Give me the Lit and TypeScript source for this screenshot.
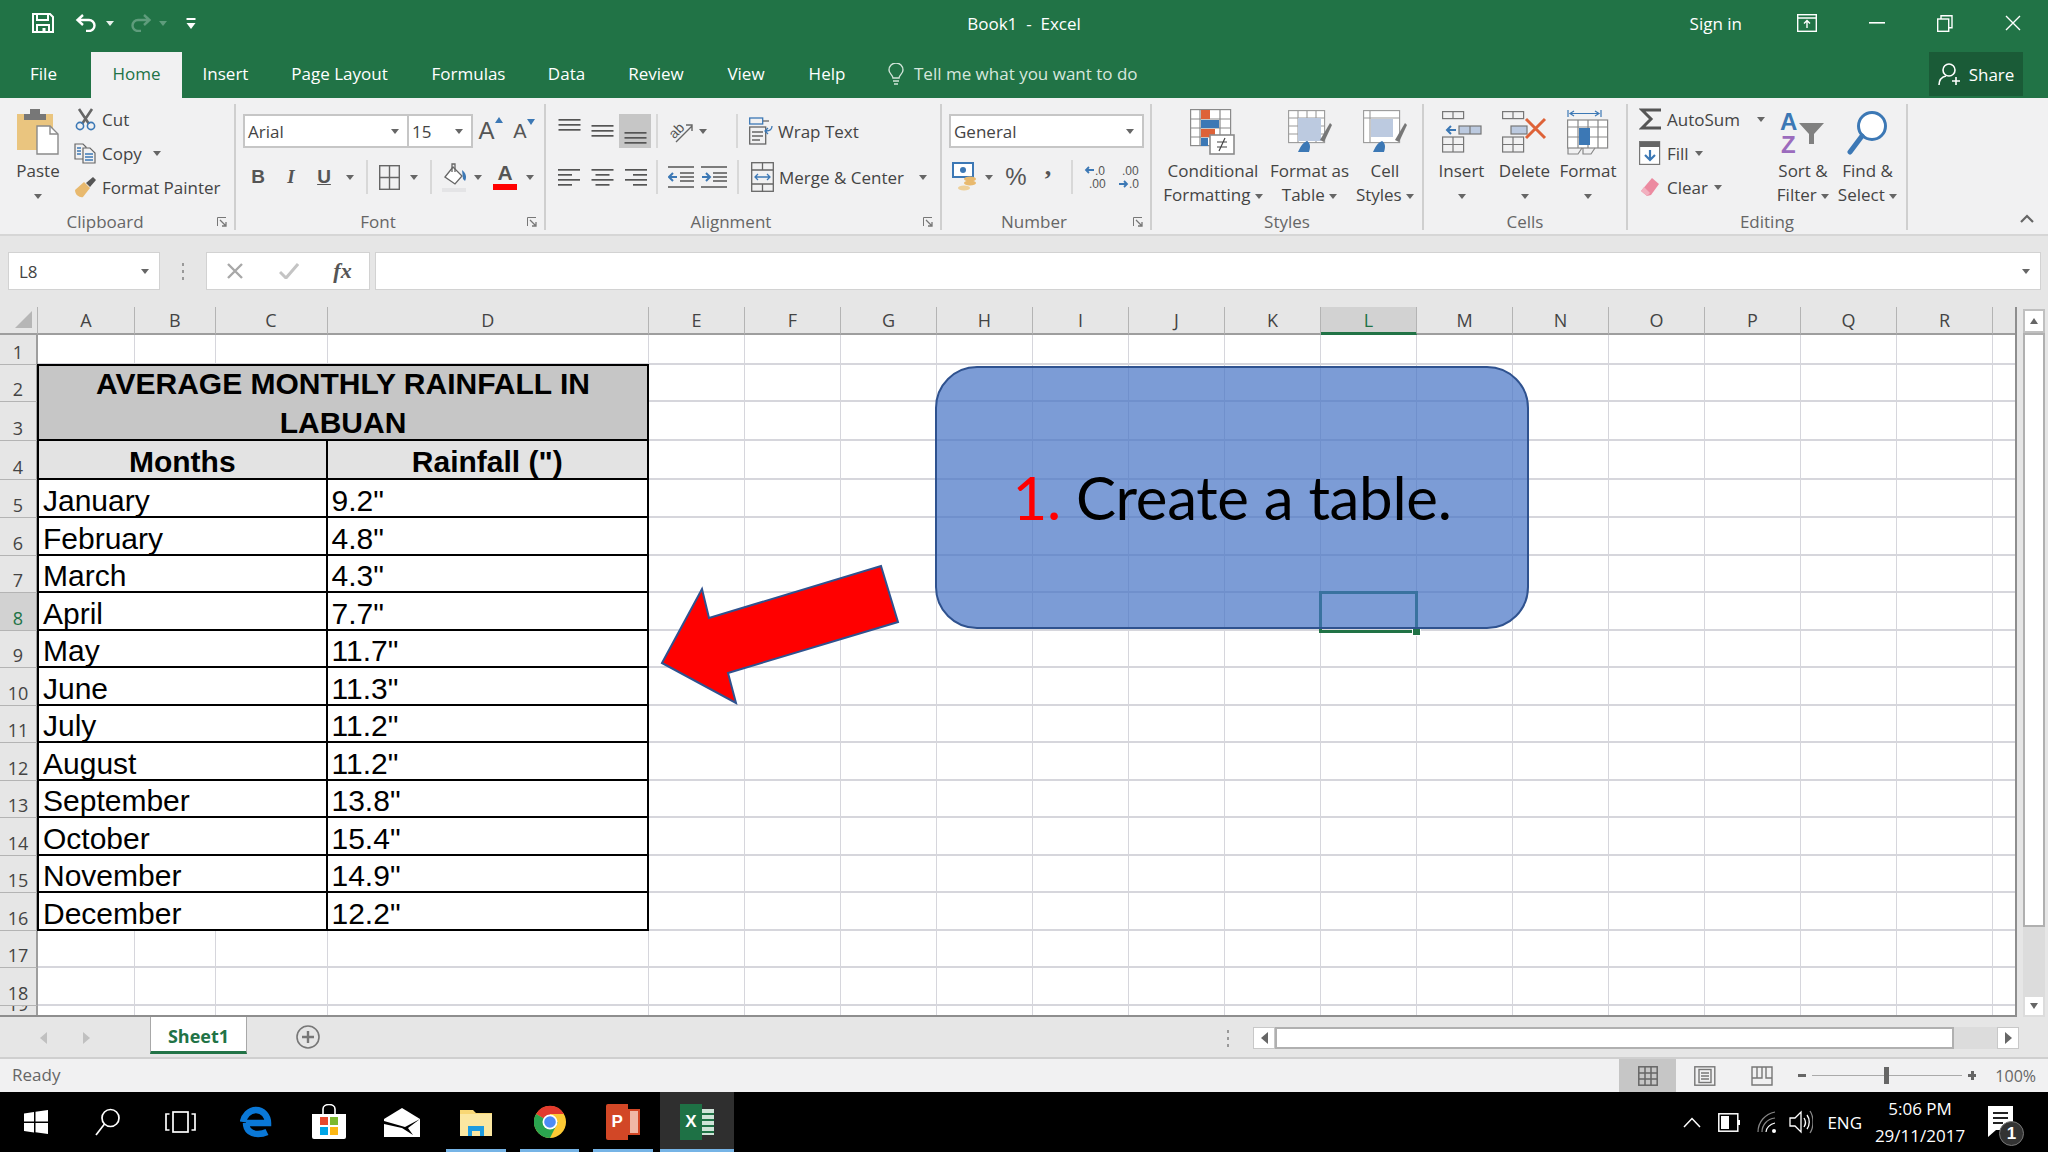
import { LitElement, html, css, TemplateResult } from 'lit';
import { customElement } from 'lit/decorators.js';

const TABS: [string, number][] = [
  ['File', 87], ['Home', 91], ['Insert', 87], ['Page Layout', 141], ['Formulas', 117],
  ['Data', 79], ['Review', 100], ['View', 80], ['Help', 82],
];

// column widths A..R plus the sliver after R
const COLS = [97, 80.5, 112, 321.5, ...Array(14).fill(96), 23];
const LETTERS = 'ABCDEFGHIJKLMNOPQR'.split('').concat('');
const ROWS = [30, 37, 39, 39, 38, ...Array(13).fill(37.5), 11.5];

const MONTHS: [string, string][] = [
  ['January', '9.2"'], ['February', '4.8"'], ['March', '4.3"'], ['April', '7.7"'],
  ['May', '11.7"'], ['June', '11.3"'], ['July', '11.2"'], ['August', '11.2"'],
  ['September', '13.8"'], ['October', '15.4"'], ['November', '14.9"'], ['December', '12.2"'],
];

const caret = (cls = '') => html`<i class="caret ${cls}"></i>`;
const slot = (w: number, c: unknown = '') => html`<span class="slot" style="width:${w}px">${c}</span>`;
const sep = () => html`<span class="vsep"></span>`;

// stack of horizontal rules for the alignment buttons
const rules = (rows: [number, number][], align: 'l' | 'c' | 'r' = 'c', w = 23, h = 26) => html`
  <svg width=${w} height=${h} viewBox="0 0 ${w} ${h}" fill="#555">
    ${rows.map(([y, len]) => {
      const x = align === 'l' ? 0 : align === 'r' ? w - len : (w - len) / 2;
      return html`<svg><rect x=${x} y=${y} width=${len} height="1.7"></rect></svg>`;
    })}
  </svg>`;

const ic = {
  save: html`<svg width="22" height="20" viewBox="0 0 22 20" fill="none" stroke="#fff" stroke-width="2"><path d="M1 1h17l3 3v15H1z"/><path d="M5 1v6h11V1M5 19v-7h12v7"/><path d="M12 15v4" stroke-width="3"/></svg>`,
  undo: html`<svg width="22" height="18" viewBox="0 0 22 18" fill="none" stroke="#fff" stroke-width="2.4"><path d="M8 1 2.5 6 8 11M3 6h11a5 5 0 0 1 0 11h-3"/></svg>`,
  redo: html`<svg width="22" height="18" viewBox="0 0 22 18" fill="none" stroke="#5f9c7c" stroke-width="2.4"><path d="M14 1l5.5 5L14 11M19 6H8a5 5 0 0 0 0 11h3"/></svg>`,
  qat: html`<svg width="10" height="13" viewBox="0 0 10 13" fill="#fff"><rect width="9" height="2" x=".5" y="1"/><path d="M.5 6h9L5 12z"/></svg>`,
  ribbonMode: html`<svg width="20" height="18" viewBox="0 0 20 18" fill="none" stroke="#fff" stroke-width="1.4"><rect x=".7" y=".7" width="18.6" height="16.6"/><path d="M1 4h18M10 14V7M7 9.5 10 6.5l3 3"/></svg>`,
  min: html`<svg width="16" height="2"><rect width="16" height="1.6" fill="#fff"/></svg>`,
  restore: html`<svg width="16" height="17" viewBox="0 0 16 17" fill="none" stroke="#fff" stroke-width="1.4"><rect x=".7" y="4" width="11" height="12.3"/><path d="M4 4V.8h11v12h-3"/></svg>`,
  close: html`<svg width="16" height="16" viewBox="0 0 16 16" stroke="#fff" stroke-width="1.4"><path d="M1 1l14 14M15 1 1 15"/></svg>`,
  bulb: html`<svg width="16" height="22" viewBox="0 0 16 22" fill="none" stroke="#cfe3d8" stroke-width="1.4"><path d="M5 15c0-3-4-4-4-8a7 7 0 0 1 14 0c0 4-4 5-4 8z"/><path d="M5 18h6M6 21h4"/></svg>`,
  person: html`<svg width="24" height="24" viewBox="0 0 24 24" fill="none" stroke="#fff" stroke-width="1.6"><circle cx="11" cy="8" r="6"/><path d="M1 23c0-5 3-8 7-9M14 19h8M18 15v8"/></svg>`,
  paste: html`<svg width="42" height="46" viewBox="0 0 42 46"><rect x="0" y="5" width="36" height="36" fill="#eac57f"/><path d="M7 5h6V0h10v5h6v6H7z" fill="#777"/><path d="M20 17h13l8 8v20H20z" fill="#fff" stroke="#8a8a8a" stroke-width="1.4"/><path d="M33 17v8h8" fill="none" stroke="#8a8a8a" stroke-width="1.4"/></svg>`,
  cut: html`<svg width="21" height="23" viewBox="0 0 21 23" fill="none"><path d="M4 1l10 15M17 1 7 16" stroke="#666" stroke-width="2.6"/><circle cx="5" cy="18" r="3.6" stroke="#3c78b5" stroke-width="1.6"/><circle cx="16" cy="18" r="3.6" stroke="#3c78b5" stroke-width="1.6"/></svg>`,
  copy: html`<svg width="22" height="21" viewBox="0 0 22 21" fill="none" stroke="#666" stroke-width="1.2"><path d="M1 1h8l3 3v12H1z"/><path d="M9 5h7l5 5v10H9z" fill="#f1f1f2"/><path d="M3 5h4M3 8h4M3 11h4" stroke="#3c78b5" stroke-width="1.4"/><path d="M11 11h8M11 14h8M11 17h8" stroke="#3c78b5" stroke-width="1.4"/></svg>`,
  painter: html`<svg width="24" height="22" viewBox="0 0 24 22"><path d="M2 14 11 6l6 6-7 9c-3 1-8-2-8-7z" fill="#e8b96e"/><path d="M13 7l7-6 3 3-6 7z" fill="#555"/></svg>`,
  tri: (c: string, down = false) => html`<svg width="8" height="6" viewBox="0 0 8 6" fill=${c} class="tri"><path d=${down ? 'M0 0h8L4 6z' : 'M0 6h8L4 0z'}/></svg>`,
  borders: html`<svg width="21" height="25" viewBox="0 0 21 25" fill="none" stroke="#666" stroke-width="1.4"><rect x=".7" y=".7" width="19.6" height="23.6"/><path d="M10.5 1v23M1 12.5h19"/></svg>`,
  fill: html`<svg width="26" height="30" viewBox="0 0 26 30"><path d="M3 15 11 5l9 9-7 8z" fill="#fff" stroke="#666" stroke-width="1.3"/><path d="M10 10V2h3v8" fill="none" stroke="#666" stroke-width="1.3"/><path d="M20 8c4 3 5 7 3 11l-2-2z" fill="#3c78b5"/><rect x="0" y="26" width="24" height="4" fill="#e4e4e6"/></svg>`,
  orient: html`<svg width="26" height="26" viewBox="0 0 26 26" fill="none" stroke="#666" stroke-width="1.4"><text x="1" y="17" font-family="Liberation Sans" font-size="14" fill="#555" stroke="none" transform="rotate(-45 9 13)">ab</text><path d="M8 24 24 8M18 7h6v6"/></svg>`,
  wrap: html`<svg width="24" height="28" viewBox="0 0 24 28" fill="none" stroke="#666" stroke-width="1.3"><rect x=".7" y="1" width="13" height="6" stroke="#3c78b5"/><path d="M14 4h6"/><rect x=".7" y="10" width="16" height="17"/><path d="M3 15h11M3 19h11M3 23h8"/><path d="M23 9c0 4-2 5-6 5M19 11l-3 3 3 3" stroke="#3c78b5"/></svg>`,
  merge: html`<svg width="23" height="30" viewBox="0 0 23 30" fill="none" stroke="#666" stroke-width="1.3"><rect x=".7" y=".7" width="21.6" height="28.6"/><path d="M1 8h21M1 22h21M11.5 1v7M11.5 22v8"/><path d="M4 15h15M7 12l-3 3 3 3M16 12l3 3-3 3" stroke="#3c78b5"/></svg>`,
  outdent: html`<svg width="26" height="22" viewBox="0 0 26 22" fill="none" stroke="#555" stroke-width="1.6"><path d="M0 1h26M12 7h14M12 11h14M12 15h14M0 21h26"/><path d="M9 11H1M5 7l-4 4 4 4" stroke="#3c78b5" stroke-width="2"/></svg>`,
  indent: html`<svg width="26" height="22" viewBox="0 0 26 22" fill="none" stroke="#555" stroke-width="1.6"><path d="M0 1h26M12 7h14M12 11h14M12 15h14M0 21h26"/><path d="M1 11h8M5 7l4 4-4 4" stroke="#3c78b5" stroke-width="2"/></svg>`,
  currency: html`<svg width="26" height="32" viewBox="0 0 26 32"><rect x="1" y="2" width="20" height="14" fill="#fff" stroke="#3c78b5" stroke-width="2"/><circle cx="11" cy="9" r="3" fill="#3c78b5"/><ellipse cx="18" cy="18" rx="6" ry="2.6" fill="#e8b96e"/><ellipse cx="18" cy="22" rx="6" ry="2.6" fill="#e8b96e"/><ellipse cx="12" cy="27" rx="6" ry="2.6" fill="#eed09a"/></svg>`,
  incDec: html`<svg width="24" height="26" viewBox="0 0 24 26"><path d="M10 6H2M5 3 2 6l3 3" fill="none" stroke="#3c78b5" stroke-width="1.8"/><text x="11" y="11" font-family="Liberation Sans" font-size="12" fill="#555">.0</text><text x="5" y="24" font-family="Liberation Sans" font-size="12" fill="#555">.00</text></svg>`,
  decDec: html`<svg width="24" height="26" viewBox="0 0 24 26"><text x="5" y="11" font-family="Liberation Sans" font-size="12" fill="#555">.00</text><path d="M2 20h8M7 17l3 3-3 3" fill="none" stroke="#3c78b5" stroke-width="1.8"/><text x="12" y="24" font-family="Liberation Sans" font-size="12" fill="#555">.0</text></svg>`,
  cond: html`<svg width="46" height="46" viewBox="0 0 46 46" fill="#fff" stroke="#8b8b8b" stroke-width="1.2"><rect x=".6" y=".6" width="40" height="36"/><path d="M10 1v36M30 1v36M1 10h40M1 19h40M1 28h40" fill="none"/><rect x="11" y="1" width="9" height="9" fill="#de6238" stroke="none"/><rect x="11" y="11" width="18" height="8" fill="#3c78b5" stroke="none"/><rect x="11" y="20" width="14" height="8" fill="#de6238" stroke="none"/><rect x="11" y="29" width="7" height="8" fill="#3c78b5" stroke="none"/><rect x="20" y="26" width="24" height="19" stroke-width="1.6"/><path d="M27 33h10M27 38h10M35 29l-6 13" fill="none" stroke="#444"/></svg>`,
  tableFmt: html`<svg width="44" height="44" viewBox="0 0 44 44" fill="#fff" stroke="#9a9a9a" stroke-width="1.1"><rect x=".6" y=".6" width="36" height="32"/><path d="M1 8h36M1 16h36M1 24h36M10 1v32M19 1v32M28 1v32" fill="none"/><rect x="10" y="8" width="23" height="23" fill="#bccae0" stroke="none"/><path d="M32 30l10-17 2 2-8 17z" fill="#777" stroke="none"/><path d="M10 42c2-4 4-9 9-11 3 2 4 5 2 11z" fill="#3c78b5" stroke="none"/></svg>`,
  cellStyles: html`<svg width="44" height="44" viewBox="0 0 44 44" fill="#fff" stroke="#9a9a9a" stroke-width="1.1"><rect x=".6" y=".6" width="36" height="32"/><path d="M1 8h36M7 1v32" fill="none"/><rect x="8" y="9" width="22" height="18" fill="#bccae0" stroke="none"/><path d="M32 30l10-17 2 2-8 17z" fill="#777" stroke="none"/><path d="M10 42c2-4 4-9 9-11 3 2 4 5 2 11z" fill="#3c78b5" stroke="none"/></svg>`,
  cellInsert: html`<svg width="40" height="42" viewBox="0 0 40 42" fill="none" stroke="#777" stroke-width="1.2"><rect x=".6" y=".6" width="21" height="7"/><path d="M11 1v7"/><rect x="17" y="15" width="22" height="8" fill="#bccae0"/><path d="M28 15v8"/><rect x=".6" y="26" width="21" height="15"/><path d="M11 26v15M1 33.500h21"/><path d="M14 19H5M9 15l-4 4 4 4" stroke="#3c78b5" stroke-width="2"/></svg>`,
  cellDelete: html`<svg width="46" height="42" viewBox="0 0 46 42" fill="none" stroke="#777" stroke-width="1.2"><rect x=".6" y=".6" width="21" height="7"/><path d="M11 1v7"/><rect x="9" y="15" width="16" height="8" fill="#bccae0"/><rect x=".6" y="26" width="21" height="15"/><path d="M11 26v15M1 33.500h21"/><path d="M24 8l19 19M43 8 24 27" stroke="#de6238" stroke-width="3"/></svg>`,
  cellFormat: html`<svg width="42" height="46" viewBox="0 0 42 46" fill="none" stroke="#888" stroke-width="1.2"><path d="M1 1v7M34 1v7M3 4.500h29M7 2 3 4.500 7 7M28 2l4 2.500-4 2.500" stroke="#3c78b5"/><rect x=".6" y="11" width="40" height="28" fill="#fff"/><path d="M1 18h40M1 28h40M11 11v28M21 11v28M31 11v28"/><rect x="12" y="19" width="11" height="17" fill="#3c78b5" stroke="none"/><path d="M1 39v6h10l4-6M16 39v6h8l4-6"/></svg>`,
  sum: html`<svg width="23" height="24" viewBox="0 0 23 24" fill="none" stroke="#555" stroke-width="3"><path d="M22 3H3l9 9-9 9h19"/></svg>`,
  fillDown: html`<svg width="22" height="24" viewBox="0 0 22 24" fill="none" stroke="#777" stroke-width="1.2"><rect x=".6" y=".6" width="20" height="22.800" fill="#fff"/><rect x="1" y="1" width="20" height="5" fill="#666" stroke="none"/><path d="M11 9v10M6 14l5 5 5-5" stroke="#3c78b5" stroke-width="2.2"/></svg>`,
  eraser: html`<svg width="20" height="20" viewBox="0 0 20 20"><path d="M12 1l7 6-8 11-4 1-6-5z" fill="#ec8aa0"/><path d="M7 19l-6-5 3-4 6 6z" fill="#f2b1c0"/></svg>`,
  sort: html`<svg width="46" height="46" viewBox="0 0 46 46"><text x="0" y="21" font-family="Liberation Sans" font-size="24" font-weight="700" fill="#3c78b5">A</text><text x="1" y="44" font-family="Liberation Sans" font-size="24" font-weight="700" fill="#9b6bbd">Z</text><path d="M19 14h25l-10 11v10h-5V25z" fill="#808080"/></svg>`,
  find: html`<svg width="42" height="46" viewBox="0 0 42 46" fill="none"><circle cx="25" cy="17" r="13.500" stroke="#3c78b5" stroke-width="3" fill="#fff"/><path d="M15 27 3 43" stroke="#3c78b5" stroke-width="5" stroke-linecap="round"/></svg>`,
  launcher: html`<svg width="10" height="10" viewBox="0 0 10 10" fill="none" stroke="#777" stroke-width="1"><path d="M.5 9V.5H9"/><path d="M3 3l6 6M9 5v4H5" stroke-width="1.3"/></svg>`,
  up: html`<svg width="14" height="9" viewBox="0 0 14 9" fill="none" stroke="#666" stroke-width="2.2"><path d="M1 8l6-6 6 6"/></svg>`,
  x: html`<svg width="16" height="16" viewBox="0 0 16 16" stroke="#a8a8a8" stroke-width="2.400"><path d="M1 1l14 14M15 1 1 15"/></svg>`,
  check: html`<svg width="20" height="16" viewBox="0 0 20 16" fill="none" stroke="#c4c4c4" stroke-width="3"><path d="M1 9l6 6L19 1"/></svg>`,
  plusCircle: html`<svg width="24" height="24" viewBox="0 0 24 24" fill="none" stroke="#777" stroke-width="1.6"><circle cx="12" cy="12" r="11"/><path d="M12 6v12M6 12h12" stroke-width="2.400"/></svg>`,
  normal: html`<svg width="20" height="20" viewBox="0 0 20 20" fill="none" stroke="#666" stroke-width="1.5"><rect x=".8" y=".8" width="18.400" height="18.400"/><path d="M7 1v18M13 1v18M1 7h18M1 13h18"/></svg>`,
  layout: html`<svg width="22" height="20" viewBox="0 0 22 20" fill="none" stroke="#777" stroke-width="1.4"><rect x=".8" y=".8" width="20" height="18.400"/><rect x="5" y="3.500" width="12" height="13"/><path d="M7 7h8M7 10h8M7 13h8"/></svg>`,
  pageBreak: html`<svg width="22" height="20" viewBox="0 0 22 20" fill="none" stroke="#777" stroke-width="1.4"><path d="M1 1h20v18H1zM1 12h10V1M6 1v11M21 12h-6V1"/></svg>`,
  win: html`<svg width="24" height="24" viewBox="0 0 24 24" fill="#fff"><path d="M0 3.500 10 2v9.500H0zM11.500 1.800 24 0v11.500H11.500zM0 13h10v9.500L0 21zM11.500 13H24v11l-12.500-1.800z"/></svg>`,
  search: html`<svg width="26" height="28" viewBox="0 0 26 28" fill="none" stroke="#fff" stroke-width="1.7"><circle cx="15.500" cy="10" r="8.500"/><path d="M9.500 16 1 27"/></svg>`,
  taskview: html`<svg width="31" height="22" viewBox="0 0 31 22" fill="none" stroke="#fff" stroke-width="1.7"><rect x="8" y="1" width="15" height="20"/><path d="M4.500 3H1v16h3.500M26.500 3H30v16h-3.500"/></svg>`,
  edge: html`<svg width="32" height="34" viewBox="0 0 32 32" fill="none" stroke="#0a78d7" stroke-width="6.500"><path d="M6 17h22c0-7-5-13-12-13C9 4 4 10 3 16M6 17c0 8 6 11 12 11 4 0 7-1 9-2"/></svg>`,
  store: html`<svg width="36" height="36" viewBox="0 0 36 36"><path d="M1 10h34v23a2 2 0 0 1-2 2H3a2 2 0 0 1-2-2z" fill="#fff"/><path d="M12 10V5c0-6 12-6 12 0v5" fill="none" stroke="#fff" stroke-width="1.600"/><rect x="9" y="13" width="8" height="8" fill="#e7492e"/><rect x="19" y="13" width="8" height="8" fill="#7cb82f"/><rect x="9" y="23" width="8" height="8" fill="#00a6e8"/><rect x="19" y="23" width="8" height="8" fill="#fcb714"/></svg>`,
  mail: html`<svg width="36" height="29" viewBox="0 0 36 29"><path d="M0 11 18 0l18 11v18H0z" fill="#fff"/><path d="M0 13l21 6 15-8-12 9 5 7-11-7-18-4z" fill="#000"/></svg>`,
  folder: html`<svg width="32" height="28" viewBox="0 0 32 28"><path d="M0 2h13l3 3h16v23H0z" fill="#f8d775"/><path d="M0 6h32v22H0z" fill="#fbe7a1"/><path d="M8 18h16v10h-4v-5h-8v5H8z" fill="#1e9be0"/></svg>`,
  chrome: html`<svg width="32" height="34" viewBox="0 0 32 32"><circle cx="16" cy="16" r="16" fill="#fcc934"/><path d="M16 16 2.100 8A16 16 0 0 1 30 8H16z" fill="#e33b2e"/><path d="M16 16 2.100 8A16 16 0 0 0 16 32l8-16z" fill="#2aa44f"/><circle cx="16" cy="16" r="7.500" fill="#fff"/><circle cx="16" cy="16" r="5.800" fill="#4d8bf5"/></svg>`,
  chevron: html`<svg width="18" height="11" viewBox="0 0 18 11" fill="none" stroke="#fff" stroke-width="1.500"><path d="M1 10l8-8.500L17 10"/></svg>`,
  battery: html`<svg width="22" height="19" viewBox="0 0 22 19"><rect x=".8" y=".8" width="19" height="17.400" fill="none" stroke="#fff" stroke-width="1.500"/><rect x="3" y="3" width="8" height="13" fill="#fff"/><rect x="20" y="7" width="2" height="5" fill="#fff"/></svg>`,
  wifi: html`<svg width="20" height="22" viewBox="0 0 20 22" fill="none" stroke="#bbb" stroke-width="1.200"><path d="M1 21C1 11 8 3 18 1M5 21c0-7 5-13 13-14" stroke="#888"/><path d="M9 21c0-4 4-8 9-9" stroke="#fff"/><circle cx="17" cy="20" r="2" fill="#fff" stroke="none"/></svg>`,
  volume: html`<svg width="24" height="26" viewBox="0 0 24 26" fill="none" stroke="#fff" stroke-width="1.300"><path d="M1 9h5l6-6v20l-6-6H1z"/><path d="M15 9c2 3 2 6 0 9M18 6c3 4 3 10 0 14" /><path d="M21 2c4 6 4 16 0 22" stroke="#888"/></svg>`,
  notify: html`<svg width="26" height="32" viewBox="0 0 26 32"><path d="M0 0h25v24H8l-8 7z" fill="#fff"/><path d="M5 7h15M5 12h15M5 17h10" stroke="#222" stroke-width="1.800"/></svg>`,
};

@customElement('app-root')
export class AppRoot extends LitElement {
  static styles = css`
    :host {
      display: flex;
      flex-direction: column;
      width: 2048px;
      height: 1152px;
      overflow: hidden;
      background: #e6e6e6;
      font-family: 'Open Sans', 'Noto Sans', sans-serif;
      font-size: 17px;
      color: #444;
    }
    svg { display: block; flex: none; }
    svg.tri { display: inline-block; }

    .caret {
      display: inline-block;
      width: 0;
      height: 0;
      border-left: 4.5px solid transparent;
      border-right: 4.5px solid transparent;
      border-top: 5px solid #666;
      vertical-align: middle;
    }
    .caret.light { border-top-color: #e8f1ec; }
    .caret.dim { border-top-color: #5f9c7c; }
    .slot {
      display: inline-flex;
      align-items: center;
      justify-content: center;
      flex: none;
      height: 100%;
    }

    /* title bar */
    .green { background: #217346; color: #fff; }
    .titlebar {
      display: grid;
      grid-template-columns: 1fr auto 1fr;
      align-items: center;
      height: 52px;
      padding-bottom: 6px;
      box-sizing: border-box;
    }
    .qat { display: flex; align-items: center; height: 100%; padding-left: 32px; }
    .doc-title { font-size: 17px; white-space: pre; }
    .win-ctl { display: flex; align-items: center; justify-content: flex-end; height: 100%; }
    .signin { margin-right: 29px; }

    .tabrow { display: flex; align-items: flex-end; height: 46px; }
    .tab {
      display: flex;
      align-items: center;
      justify-content: center;
      height: 46px;
      flex: none;
      padding-bottom: 3px;
      box-sizing: border-box;
    }
    .tab:first-child { margin-right: 4px; }
    .tab.active { background: #f1f1f2; color: #217346; }
    .tellme { display: flex; align-items: center; gap: 10px; height: 46px; padding-bottom: 3px; box-sizing: border-box; margin-left: 20px; color: #d6e7dd; }
    .share {
      display: flex;
      align-items: center;
      justify-content: center;
      gap: 7px;
      width: 94px;
      height: 44px;
      margin: 0 25px 2px auto;
      background: #1a5b37;
    }

    /* ribbon */
    .ribbon {
      display: flex;
      height: 138px;
      padding-top: 6px;
      box-sizing: border-box;
      background: #f1f1f2;
      border-bottom: 2px solid #d6d6d6;
    }
    .group {
      display: flex;
      flex-direction: column;
      flex: none;
      height: 126px;
      box-sizing: border-box;
      border-right: 2px solid #cfcfcf;
    }
    .body { display: flex; height: 110px; }
    .label-row { display: flex; align-items: center; height: 16px; line-height: 18px; padding-top: 5px; color: #666; }
    .label-row span { flex: 1; text-align: center; }
    .launcher { flex: none; width: 24px; display: flex; justify-content: center; }
    .clipboard { width: 236px; }
    .font { width: 310px; }
    .alignment { width: 396px; }
    .number { width: 210px; }
    .styles { width: 272px; }
    .cells { width: 204px; }
    .editing { width: 280px; }
    .collapse { flex: 1; display: flex; align-items: flex-end; justify-content: flex-end; padding: 0 14px 7px 0; height: 126px; box-sizing: border-box; }

    .large {
      display: flex;
      flex-direction: column;
      align-items: center;
      flex: none;
      line-height: 24px;
      white-space: nowrap;
    }
    .large .icon { display: flex; align-items: center; justify-content: center; height: 55px; }
    .small-rows { display: flex; flex-direction: column; margin-top: -2px; }
    .small { display: flex; align-items: center; height: 34px; white-space: nowrap; }
    .small .glyph { display: flex; justify-content: center; width: 28px; margin-right: 3px; flex: none; }
    .small .caret { margin-left: 6px; }
    .clipboard .body { padding-left: 8px; gap: 3px; }
    .styles .body { padding-left: 11px; }
    .cells .body { padding-left: 6px; }
    .editing .body { padding-left: 8px; }
    .editing .small-rows { width: 135px; }

    .two-rows { display: flex; flex-direction: column; gap: 12px; padding: 10px 0 0 7px; }
    .row { display: flex; align-items: center; height: 34px; white-space: nowrap; }
    .field {
      display: flex;
      align-items: center;
      justify-content: space-between;
      box-sizing: border-box;
      height: 34px;
      padding: 0 8px 0 3px;
      background: #fff;
      border: 2px solid #c6c6c6;
      color: #444;
    }
    .fontname { width: 166px; }
    .fontsize { width: 64px; border-left: none; }
    .fmt { width: 195px; }
    .vsep { display: block; width: 2px; height: 34px; background: #d8d8d8; flex: none; }
    .selected { background: #c6c6c6; }
    .grow { font-size: 24px; line-height: 1.2; color: #555; display: inline-flex; align-items: flex-start; font-family: 'Liberation Sans', sans-serif; }
    .grow.sm { font-size: 20px; }
    .fmt-b { font: 700 19px 'Liberation Sans', sans-serif; color: #555; }
    .fmt-i { font: italic 700 19px 'Liberation Serif', serif; color: #555; }
    .fmt-u { font: 700 19px 'Liberation Sans', sans-serif; color: #555; text-decoration: underline; }
    .colorA { display: flex; flex-direction: column; align-items: center; font: 700 21px/18px 'Liberation Sans', sans-serif; color: #555; }
    .colorA i { display: block; width: 24px; height: 6px; background: #f00; margin-top: 2px; }
    .pct { font: 24px 'Liberation Sans', sans-serif; color: #555; }
    .comma { font: 700 26px/1 'Liberation Serif', serif; color: #555; padding-bottom: 20px; }
    .wide-text { margin-left: 6px; }

    /* formula bar */
    .fxbar {
      display: flex;
      align-items: center;
      height: 71px;
      box-sizing: border-box;
      padding: 16px 7px 17px 8px;
      background: #e6e6e6;
    }
    .box { display: flex; align-items: center; height: 38px; background: #fff; border: 1px solid #d2d2d2; box-sizing: border-box; flex: none; }
    .namebox { width: 152px; justify-content: space-between; padding: 0 10px; }
    .grip { width: 46px; display: flex; flex-direction: column; align-items: center; gap: 4px; flex: none; }
    .grip i { display: block; width: 2px; height: 3px; background: #999; }
    .fxbtns { width: 164px; }
    .fx { font: italic 700 22px 'Liberation Serif', serif; color: #555; }
    .fxinput { flex: 1; margin-left: 5px; justify-content: flex-end; padding-right: 10px; }

    /* sheet */
    .sheet-wrap { display: flex; height: 710px; background: #e6e6e6; flex: none; }
    .sheet {
      position: relative;
      display: grid;
      width: 2017px;
      height: 710px;
      overflow: hidden;
      background: #fff;
      border-right: 2px solid #8e8e8e;
      border-bottom: 2px solid #8e8e8e;
      box-sizing: border-box;
    }
    .hd {
      display: flex;
      align-items: center;
      justify-content: center;
      overflow: hidden;
      background: #e6e6e6;
      color: #444;
      box-sizing: border-box;
      font-size: 18px;
    }
    .hd.col { border-right: 1px solid #b4b4b4; border-bottom: 2px solid #9e9e9e; }
    .hd.rowh { border-right: 2px solid #9e9e9e; border-bottom: 1px solid #b4b4b4; align-items: flex-end; line-height: 24px; }
    .hd.on { background: #d2d2d2; color: #217346; }
    .hd.col.on { border-bottom: 3px solid #217346; }
    .corner { display: flex; align-items: flex-end; justify-content: flex-end; padding: 0 5px 5px 0; background: #e6e6e6; border-bottom: 2px solid #9e9e9e; border-right: 1px solid #b4b4b4; box-sizing: border-box; }
    .corner i { display: block; border-left: 17px solid transparent; border-bottom: 17px solid #b6b6b6; }
    .c { border-right: 1px solid #d6d6dc; border-bottom: 2px solid #d6d6dc; box-sizing: border-box; }
    .t {
      display: flex;
      align-items: flex-end;
      box-sizing: border-box;
      overflow: hidden;
      font: 30px/31px 'Liberation Sans', sans-serif;
      color: #000;
      border-right: 2px solid #000;
      border-bottom: 2px solid #000;
      padding-left: 4px;
      white-space: nowrap;
    }
    .t.first { border-left: 2px solid #000; margin-left: -1px; }
    .t.title {
      justify-content: center;
      align-items: center;
      text-align: center;
      white-space: normal;
      background: #c6c6c6;
      font-weight: 700;
      line-height: 39px;
      border-top: 2px solid #000;
      padding: 1px 40px 0;
      margin-top: -1px;
    }
    .t.head { justify-content: center; background: #e3e3e3; font-weight: 700; padding-left: 0; line-height: 33px; }
    .sel {
      position: relative;
      margin: -2px -1px -2px -2px;
      border: 3px solid #217346;
    }
    .sel i { position: absolute; right: -6px; bottom: -6px; width: 7px; height: 7px; background: #217346; border: 1px solid #fff; }
    .note {
      position: absolute;
      left: 935px;
      top: 59px;
      width: 594px;
      height: 263px;
      box-sizing: border-box;
      display: flex;
      align-items: center;
      justify-content: center;
      padding-bottom: 2px;
      border: 2px solid #2f528f;
      border-radius: 42px;
      background: rgba(68, 114, 196, 0.7);
      color: #000;
      font: 60px 'Lato', sans-serif;
      letter-spacing: -0.3px;
      white-space: pre;
    }
    .note b { font-weight: 400; color: #f00; }
    .arrow { position: absolute; left: 0; top: 0; }

    .vscroll { flex: 1; display: flex; flex-direction: column; align-items: center; padding: 2px 0 0 2px; box-sizing: border-box; height: 710px; }
    .vbtn { display: flex; align-items: center; justify-content: center; width: 22px; height: 24px; background: #fff; border: 2px solid #c0c0c0; box-sizing: border-box; flex: none; }
    .vbtn.down { height: 22px; border-color: #dcdcdc; }
    .vtrack { flex: 1; width: 22px; background: #dcdcdc; }
    .vthumb { height: 594px; background: #fff; border: 2px solid #b0b0b0; box-sizing: border-box; }

    /* sheet tabs */
    .sheetbar {
      display: flex;
      height: 42px;
      flex: none;
      background: #e6e6e6;
      box-sizing: border-box;
      border-bottom: 2px solid #cfcfcf;
    }
    .nav { display: flex; align-items: center; width: 150px; padding-left: 40px; gap: 36px; padding-top: 2px; box-sizing: border-box; }
    .nav i { display: block; border-top: 6px solid transparent; border-bottom: 6px solid transparent; }
    .nav i.l { border-right: 7px solid #c0c0c0; }
    .nav i.r { border-left: 7px solid #c0c0c0; }
    .sheettab {
      display: flex;
      align-items: center;
      justify-content: center;
      width: 97px;
      height: 37px;
      padding-top: 3px;
      background: #fff;
      color: #217346;
      font-size: 18px;
      font-weight: 700;
      border-bottom: 3px solid #217346;
      box-sizing: border-box;
      border-left: 1px solid #a8a8a8;
      border-right: 1px solid #a8a8a8;
      flex: none;
    }
    .addsheet { display: flex; align-items: center; margin-left: 49px; height: 40px; }
    .hscroll { display: flex; align-items: center; margin-left: auto; height: 42px; padding-right: 29px; }
    .dots { display: flex; flex-direction: column; gap: 4px; margin-right: 24px; }
    .dots i { display: block; width: 2px; height: 3px; background: #999; }
    .hbtn { display: flex; align-items: center; justify-content: center; width: 22px; height: 22px; background: #fff; border: 1px solid #c8c8c8; box-sizing: border-box; }
    .hthumb { width: 679px; height: 22px; background: #fff; border: 2px solid #b0b0b0; box-sizing: border-box; }
    .htrack { width: 43px; height: 22px; background: #dcdcdc; }

    /* status */
    .status {
      display: flex;
      align-items: center;
      height: 33px;
      flex: none;
      padding-left: 12px;
      padding-bottom: 2px;
      box-sizing: border-box;
      background: #f1f1f2;
      color: #666;
    }
    .views { display: flex; align-items: center; height: 33px; margin: 0 0 -2px auto; }
    .viewbtn { display: flex; align-items: center; justify-content: center; width: 57px; height: 33px; flex: none; }
    .slider { display: flex; align-items: center; margin-left: 8px; }
    .slider .pm { width: 8px; height: 3px; background: #666; position: relative; }
    .slider .pm.plus::after { content: ''; position: absolute; left: 2.500px; top: -3px; width: 3px; height: 9px; background: #666; }
    .slider .track { position: relative; width: 150px; height: 1px; margin: 0 6px; background: #aaa; }
    .slider .track i { position: absolute; left: 72px; top: -8px; width: 5px; height: 17px; background: #666; }
    .zoom { width: 52px; text-align: right; padding-right: 12px; color: #666; font-size: 16px; flex: none; margin-left: 8px; }

    /* taskbar */
    .taskbar { display: flex; align-items: center; height: 60px; flex: 1; background: #000; color: #fff; }
    .task {
      position: relative;
      display: flex;
      align-items: center;
      justify-content: center;
      width: 73.700px;
      height: 60px;
      flex: none;
    }
    .task.narrow { width: 72px; }
    .task.edge { margin-left: 2px; padding-left: 3px; box-sizing: border-box; }
    .task.run::after { content: ''; position: absolute; left: 7px; right: 7px; bottom: 0; height: 3px; background: #76b4e6; }
    .task.focus { background: #2f2f2f; }
    .task.focus::after { left: 0; right: 0; }
    .ppt { display: flex; align-items: center; width: 34px; height: 36px; }
    .ppt b { display: flex; align-items: center; justify-content: center; width: 22px; height: 36px; background: #d24726; font: 700 17px 'Liberation Sans', sans-serif; border-radius: 2px 0 0 2px; }
    .ppt i { display: block; width: 12px; height: 26px; background: #f0b8a6; border: 2px solid #d24726; box-sizing: border-box; }
    .xl { display: flex; align-items: center; width: 34px; height: 36px; }
    .xl b { display: flex; align-items: center; justify-content: center; width: 22px; height: 36px; background: #1e7145; font: 700 17px 'Liberation Sans', sans-serif; }
    .xl i { display: block; width: 12px; height: 26px; background: repeating-linear-gradient(#cfe3d8 0 4px, #1e7145 4px 6px); }
    .tray { display: flex; align-items: center; margin-left: auto; height: 60px; padding-right: 34px; color: #fff; }
    .clock { display: flex; flex-direction: column; align-items: center; line-height: 27px; width: 100px; margin-left: 8px; font-size: 17px; }
    .note-ic { position: relative; margin-left: 18px; }
    .note-ic b {
      position: absolute; right: -10px; bottom: -8px; width: 25px; height: 25px; border-radius: 50%;
      display: flex; align-items: center; justify-content: center;
      background: #333; font: 700 17px 'Liberation Sans', sans-serif; color: #fff; border: 1px solid #777; box-sizing: border-box;
    }
  `;

  private large(icon: TemplateResult, text: unknown[], width: number) {
    return html`<div class="large" style="width:${width}px"><div class="icon">${icon}</div>${text.map((t) => html`<div>${t}</div>`)}</div>`;
  }

  private group(cls: string, label: string, launcher: boolean, body: TemplateResult) {
    return html`<section class="group ${cls}">
      <div class="body">${body}</div>
      <div class="label-row"><span>${label}</span>${launcher ? html`<div class="launcher">${ic.launcher}</div>` : ''}</div>
    </section>`;
  }

  private renderRibbon() {
    const stripes: [number, number][] = [[3, 22], [8, 14], [13, 22], [18, 14]];
    return html`<div class="ribbon">
      ${this.group('clipboard', 'Clipboard', true, html`
        ${this.large(ic.paste, ['Paste', caret()], 60)}
        <div class="small-rows">
          <div class="small"><span class="glyph">${ic.cut}</span>Cut</div>
          <div class="small"><span class="glyph">${ic.copy}</span>Copy ${slot(24, caret())}</div>
          <div class="small"><span class="glyph">${ic.painter}</span>Format Painter</div>
        </div>`)}
      ${this.group('font', 'Font', true, html`
        <div class="two-rows">
          <div class="row">
            <div class="field fontname">Arial ${caret()}</div>
            <div class="field fontsize">15 ${caret()}</div>
            ${slot(35, html`<span class="grow">A${ic.tri('#3c78b5')}</span>`)}
            ${slot(32, html`<span class="grow sm">A${ic.tri('#3c78b5', true)}</span>`)}
          </div>
          <div class="row">
            ${slot(30, html`<span class="fmt-b">B</span>`)}
            ${slot(36, html`<span class="fmt-i">I</span>`)}
            ${slot(30, html`<span class="fmt-u">U</span>`)}
            ${slot(22, caret())}
            ${slot(5)}${sep()}${slot(5)}
            ${slot(32, ic.borders)}
            ${slot(18, caret())}
            ${slot(7)}${sep()}${slot(7)}
            ${slot(32, ic.fill)}
            ${slot(14, caret())}
            ${slot(40, html`<span class="colorA">A<i></i></span>`)}
            ${slot(10, caret())}
          </div>
        </div>`)}
      ${this.group('alignment', 'Alignment', true, html`
        <div class="two-rows">
          <div class="row">
            ${slot(32, rules([[1, 22], [6, 22], [11, 22]]))}
            ${slot(34, rules([[7, 22], [12, 22], [17, 22]]))}
            <span class="slot selected" style="width:32px">${rules([[14, 22], [19, 22], [24, 22]])}</span>
            ${slot(5)}${sep()}${slot(7)}
            ${slot(32, ic.orient)}
            ${slot(12, caret())}
            ${slot(27)}${sep()}${slot(12)}
            ${slot(22, ic.wrap)}<span class="wide-text">Wrap Text</span>
          </div>
          <div class="row">
            ${slot(32, rules(stripes, 'l', 23, 22))}
            ${slot(34, rules(stripes, 'c', 23, 22))}
            ${slot(32, rules(stripes, 'r', 23, 22))}
            ${slot(5)}${sep()}${slot(7)}
            ${slot(32, ic.outdent)}
            ${slot(34, ic.indent)}
            ${slot(6)}${sep()}${slot(12)}
            ${slot(22, ic.merge)}<span class="wide-text">Merge &amp; Center</span>
            ${slot(38, caret())}
          </div>
        </div>`)}
      ${this.group('number', 'Number', true, html`
        <div class="two-rows">
          <div class="row"><div class="field fmt">General ${caret()}</div></div>
          <div class="row">
            ${slot(32, ic.currency)}
            ${slot(16, caret())}
            ${slot(2)}
            ${slot(34, html`<span class="pct">%</span>`)}
            ${slot(30, html`<span class="comma">,</span>`)}
            ${slot(8)}${sep()}${slot(6)}
            ${slot(33, ic.incDec)}
            ${slot(34, ic.decDec)}
          </div>
        </div>`)}
      ${this.group('styles', 'Styles', false, html`
        ${this.large(ic.cond, ['Conditional', html`Formatting ${caret()}`], 100)}
        ${this.large(ic.tableFmt, ['Format as', html`Table ${caret()}`], 93)}
        ${this.large(ic.cellStyles, ['Cell', html`Styles ${caret()}`], 58)}`)}
      ${this.group('cells', 'Cells', false, html`
        ${this.large(ic.cellInsert, ['Insert', caret()], 63)}
        ${this.large(ic.cellDelete, ['Delete', caret()], 63)}
        ${this.large(ic.cellFormat, ['Format', caret()], 64)}`)}
      ${this.group('editing', 'Editing', false, html`
        <div class="small-rows">
          <div class="small"><span class="glyph">${ic.sum}</span>AutoSum ${slot(36, caret())}</div>
          <div class="small"><span class="glyph">${ic.fillDown}</span>Fill ${caret()}</div>
          <div class="small"><span class="glyph">${ic.eraser}</span>Clear ${caret()}</div>
        </div>
        ${this.large(ic.sort, ['Sort &', html`Filter ${caret()}`], 64)}
        ${this.large(ic.find, ['Find &', html`Select ${caret()}`], 65)}`)}
      <div class="collapse">${ic.up}</div>
    </div>`;
  }

  private renderGrid() {
    const area = (r1: number, c1: number, r2: number, c2: number) => `grid-area:${r1 + 1}/${c1 + 1}/${r2 + 1}/${c2 + 1}`;
    const cells: TemplateResult[] = [];
    ROWS.forEach((_, ri) => {
      const r = ri + 1;
      COLS.forEach((_, ci) => {
        const c = ci + 1;
        if (r >= 2 && r <= 16 && c <= 4) return;
        cells.push(html`<div class="c" style=${area(r, c, r + 1, c + 1)}></div>`);
      });
    });
    return html`
      <div class="corner" style="grid-area:1/1"><i></i></div>
      ${LETTERS.map((l, i) => html`<div class="hd col ${l === 'L' ? 'on' : ''}" style="grid-area:1/${i + 2}">${l}</div>`)}
      ${ROWS.map((_, i) => html`<div class="hd rowh ${i === 7 ? 'on' : ''}" style="grid-area:${i + 2}/1">${i + 1}</div>`)}
      ${cells}
      <div class="t title first" style=${area(2, 1, 4, 5)}>AVERAGE MONTHLY RAINFALL IN LABUAN</div>
      <div class="t head first" style=${area(4, 1, 5, 4)}>Months</div>
      <div class="t head" style=${area(4, 4, 5, 5)}>Rainfall (")</div>
      ${MONTHS.map(([m, v], i) => html`
        <div class="t first" style=${area(5 + i, 1, 6 + i, 4)}>${m}</div>
        <div class="t" style=${area(5 + i, 4, 6 + i, 5)}>${v}</div>`)}
      <div class="sel" style=${area(8, 12, 9, 13)}><i></i></div>
    `;
  }

  render() {
    const colTpl = `38px ${COLS.map((w) => w + 'px').join(' ')}`;
    const rowTpl = `28px ${ROWS.map((h) => h + 'px').join(' ')}`;
    return html`
      <header class="green titlebar">
        <div class="qat">
          ${slot(22, ic.save)}${slot(21)}${slot(22, ic.undo)}
          ${slot(26, caret('light'))}${slot(7)}${slot(22, ic.redo)}
          ${slot(22, caret('dim'))}${slot(12)}${slot(10, ic.qat)}
        </div>
        <div class="doc-title">Book1  -  Excel</div>
        <div class="win-ctl">
          <span class="signin">Sign in</span>
          ${slot(71, ic.ribbonMode)}${slot(69, ic.min)}${slot(67, ic.restore)}${slot(70, ic.close)}
        </div>
      </header>
      <nav class="green tabrow">
        ${TABS.map(([t, w]) => html`<div class="tab ${t === 'Home' ? 'active' : ''}" style="width:${w}px">${t}</div>`)}
        <div class="tellme">${ic.bulb}Tell me what you want to do</div>
        <div class="share">${ic.person}Share</div>
      </nav>
      ${this.renderRibbon()}
      <div class="fxbar">
        <div class="box namebox">L8 ${caret()}</div>
        <div class="grip"><i></i><i></i><i></i></div>
        <div class="box fxbtns">
          ${slot(55, ic.x)}${slot(53, ic.check)}${slot(55, html`<span class="fx">fx</span>`)}
        </div>
        <div class="box fxinput">${caret()}</div>
      </div>
      <div class="sheet-wrap">
        <div class="sheet" style="grid-template-columns:${colTpl};grid-template-rows:${rowTpl}">
          ${this.renderGrid()}
          <svg class="arrow" width="2016" height="710" viewBox="0 0 2016 710">
            <path d="M662 356 702 282 709 311 881 259 898 315 728 366 736 396Z" fill="#f00" stroke="#2f528f" stroke-width="2"></path>
          </svg>
          <div class="note"><b>1. </b>Create a table.</div>
        </div>
        <div class="vscroll">
          <div class="vbtn">${ic.tri('#666')}</div>
          <div class="vtrack"><div class="vthumb"></div></div>
          <div class="vbtn down">${ic.tri('#666', true)}</div>
        </div>
      </div>
      <div class="sheetbar">
        <div class="nav"><i class="l"></i><i class="r"></i></div>
        <div class="sheettab">Sheet1</div>
        <div class="addsheet">${ic.plusCircle}</div>
        <div class="hscroll">
          <div class="dots"><i></i><i></i><i></i></div>
          <div class="hbtn"><svg width="7" height="12" viewBox="0 0 7 12" fill="#666"><path d="M7 0v12L0 6z"/></svg></div>
          <div class="hthumb"></div>
          <div class="htrack"></div>
          <div class="hbtn"><svg width="7" height="12" viewBox="0 0 7 12" fill="#666"><path d="M0 0v12l7-6z"/></svg></div>
        </div>
      </div>
      <div class="status">
        Ready
        <div class="views">
          <div class="viewbtn selected">${ic.normal}</div>
          <div class="viewbtn">${ic.layout}</div>
          <div class="viewbtn">${ic.pageBreak}</div>
          <div class="slider">
            <div class="pm"></div>
            <div class="track"><i></i></div>
            <div class="pm plus"></div>
          </div>
          <div class="zoom">100%</div>
        </div>
      </div>
      <footer class="taskbar">
        <div class="task narrow">${ic.win}</div>
        <div class="task narrow">${ic.search}</div>
        <div class="task narrow">${ic.taskview}</div>
        <div class="task edge">${ic.edge}</div>
        <div class="task">${ic.store}</div>
        <div class="task">${ic.mail}</div>
        <div class="task run">${ic.folder}</div>
        <div class="task run">${ic.chrome}</div>
        <div class="task run"><div class="ppt"><b>P</b><i></i></div></div>
        <div class="task run focus"><div class="xl"><b>X</b><i></i></div></div>
        <div class="tray">
          ${slot(34, ic.chevron)}${slot(40, ic.battery)}${slot(36, ic.wifi)}${slot(32, ic.volume)}
          ${slot(10)}<span>ENG</span>
          <div class="clock"><span>5:06 PM</span><span>29/11/2017</span></div>
          <div class="note-ic">${ic.notify}<b>1</b></div>
        </div>
      </footer>
    `;
  }
}
